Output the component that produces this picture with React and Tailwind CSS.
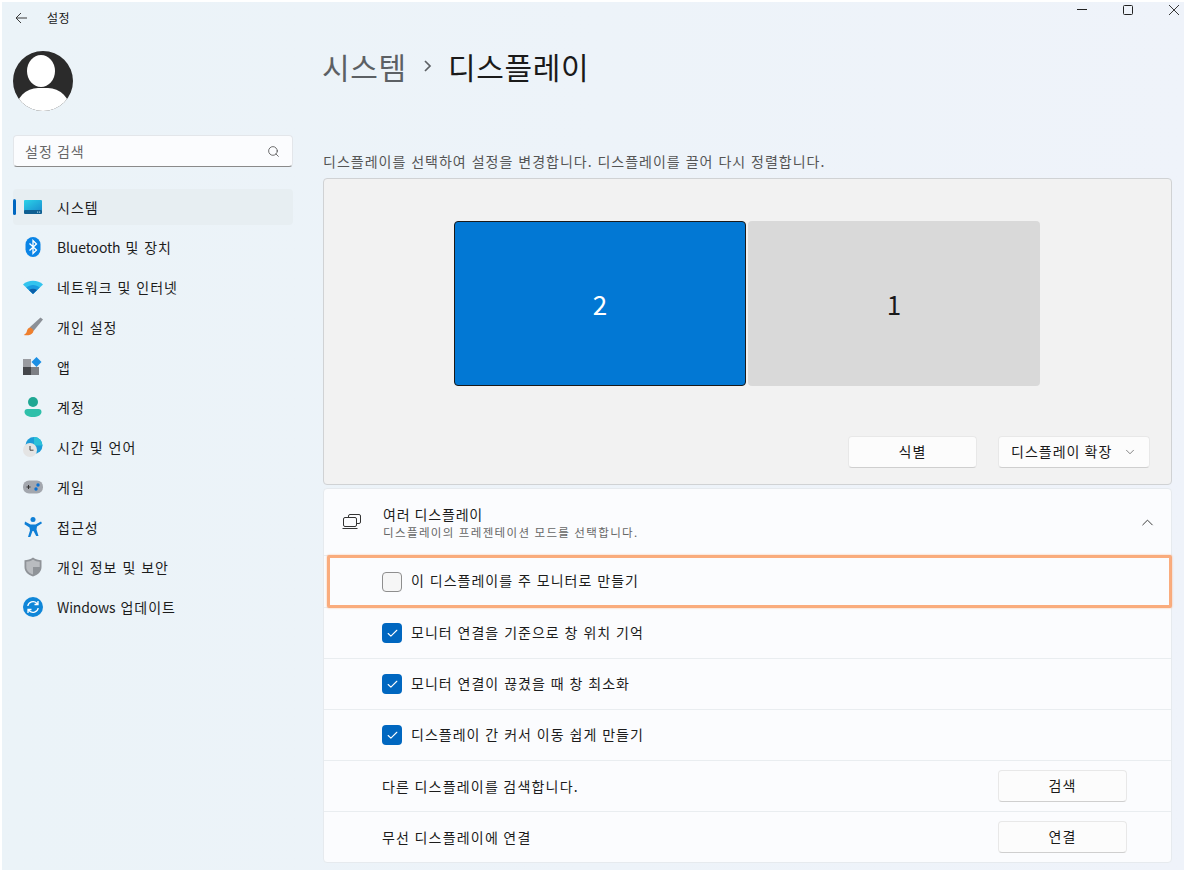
import { Search, ChevronDown, ChevronUp, Check } from 'lucide-react';

const FONT = { fontFamily: '"Noto Sans CJK KR", "Open Sans", sans-serif' };

// Sidebar icons, drawn at 20x20
function SystemIcon() {
  return (
    <svg width="20" height="20" viewBox="0 0 20 20">
      <defs>
        <linearGradient id="sys" x1="0" y1="0" x2="1" y2="1">
          <stop offset="0" stopColor="#2bd3e8" />
          <stop offset="1" stopColor="#1a8fd0" />
        </linearGradient>
      </defs>
      <rect x="1" y="3" width="18" height="11" rx="1" fill="url(#sys)" />
      <rect x="1" y="13" width="18" height="4" rx="1" fill="#0f5f92" />
      <rect x="14" y="14.6" width="1.2" height="1" fill="#bfe4f5" />
      <rect x="16" y="14.6" width="1.2" height="1" fill="#bfe4f5" />
    </svg>
  );
}

function BluetoothIcon() {
  return (
    <svg width="20" height="20" viewBox="0 0 20 20">
      <rect x="2.500" y="0" width="15" height="20" rx="7.500" fill="#0a84e6" />
      <path d="M6.500 6.500l7 6.500-3.500 3.500V3.500l3.500 3.500-7 6.500" fill="none" stroke="#fff" strokeWidth="1.3" />
    </svg>
  );
}

function WifiIcon() {
  return (
    <svg width="20" height="20" viewBox="0 0 20 20">
      <path d="M0 7.500C5 2.500 15 2.500 20 7.500L10 17z" fill="#33c4ee" />
      <path d="M3.200 10.500c4-3.400 9.600-3.400 13.600 0L10 17z" fill="#1a9be0" />
      <path d="M6 13c2.400-1.800 5.600-1.800 8 0l-4 4z" fill="#0c5fa8" />
    </svg>
  );
}

function BrushIcon() {
  return (
    <svg width="20" height="20" viewBox="0 0 20 20">
      <path d="M17.500 0.500L20 2.500 10.500 14 6.500 10.500z" fill="#8b9097" />
      <path d="M7.300 10.500c-2.600.4-3 2.200-3.600 4.200-.4 1.400-1.400 2.200-3 3.300 3.500.6 7.600.2 9.300-2.600.8-1.300.4-2.600-.4-3.400z" fill="#ee7f2e" />
    </svg>
  );
}

function AppsIcon() {
  return (
    <svg width="20" height="20" viewBox="0 0 20 20">
      <rect x="0" y="2" width="8" height="8" fill="#9a9ca1" />
      <rect x="0" y="10" width="8" height="8" fill="#45474b" />
      <rect x="8" y="10" width="8" height="8" fill="#7d7f84" />
      <path d="M13.500 0L18.500 5l-5 5-5-5z" fill="#1b8fe4" />
    </svg>
  );
}

function AccountIcon() {
  return (
    <svg width="20" height="20" viewBox="0 0 20 20">
      <circle cx="10" cy="5" r="5" fill="#1fa793" />
      <path d="M1.500 15a3 3 0 0 1 3-3h11a3 3 0 0 1 3 3c0 3-4 5-8.500 5s-8.500-2-8.500-5z" fill="#2fc0aa" />
    </svg>
  );
}

function TimeIcon() {
  return (
    <svg width="20" height="20" viewBox="0 0 20 20">
      <circle cx="11" cy="8.500" r="8.500" fill="#1b9bd8" />
      <path d="M11 0a8.500 8.500 0 0 1 8.500 8.500H11z" fill="#2bc0d8" />
      <circle cx="7" cy="13" r="7" fill="#e4e4e4" />
      <path d="M7 9v4.200h3.500" fill="none" stroke="#444" strokeWidth="1" />
    </svg>
  );
}

function GameIcon() {
  return (
    <svg width="20" height="20" viewBox="0 0 20 20">
      <rect x="0" y="3.500" width="20" height="13" rx="6" fill="#a3a7ae" />
      <path d="M3.500 10h4M5.500 8v4" stroke="#333" strokeWidth="1" />
      <circle cx="15" cy="8" r="1.700" fill="#0a6fd0" />
      <circle cx="13" cy="12" r="1.700" fill="#0a6fd0" />
    </svg>
  );
}

function AccessIcon() {
  return (
    <svg width="20" height="20" viewBox="0 0 20 20">
      <circle cx="10" cy="2.500" r="2.500" fill="#0f7fd6" />
      <path d="M2 4.500l5.500 3h5l5.500-3 1 1.800-5 3.200-.5 3 2 6.500h-2.300L10.500 14h-1L7.300 20H5l2-6.500-.5-3-5-3.200z" fill="#0f7fd6" />
    </svg>
  );
}

function ShieldIcon() {
  return (
    <svg width="20" height="20" viewBox="0 0 20 20">
      <path d="M10 0.500c2.500 1.800 5.500 2.700 8.500 2.700V10c0 4.500-3.500 8-8.500 9.500C5 18 1.500 14.500 1.500 10V3.200c3 0 6-.9 8.500-2.700z" fill="#8f9398" />
      <path d="M10 2.500c2 1.400 4.500 2.200 6.700 2.300V10H10V17.500C6 16 3.300 13.500 3.300 10V4.800C5.500 4.700 8 3.900 10 2.500z" fill="#b9bcc0" />
    </svg>
  );
}

function UpdateIcon() {
  return (
    <svg width="20" height="20" viewBox="0 0 20 20">
      <circle cx="10" cy="10" r="10" fill="#0f86d8" />
      <path d="M4.800 9a5.300 5.300 0 0 1 9-2.800l1 1M15 4v3.500h-3.500" fill="none" stroke="#fff" strokeWidth="1.300" />
      <path d="M15.200 11a5.300 5.300 0 0 1-9 2.800l-1-1M5 16v-3.500h3.500" fill="none" stroke="#fff" strokeWidth="1.300" />
    </svg>
  );
}

function DisplaysIcon() {
  return (
    <svg width="20" height="16" viewBox="0 0 20 16" fill="none" stroke="#333" strokeWidth="1">
      <path d="M6.500 3V2a1.500 1.500 0 0 1 1.500-1.500h9A1.500 1.500 0 0 1 18.500 2v6A1.500 1.500 0 0 1 17 9.500h-2.500" />
      <rect x="1.500" y="3.500" width="13" height="9" rx="1.500" fill="#fbfcfe" />
      <path d="M0.500 14.500h15" />
    </svg>
  );
}

const NAV = [
  { label: '시스템', icon: <SystemIcon />, active: true },
  { latin: 'Bluetooth', label: ' 및 장치', icon: <BluetoothIcon /> },
  { label: '네트워크 및 인터넷', icon: <WifiIcon /> },
  { label: '개인 설정', icon: <BrushIcon /> },
  { label: '앱', icon: <AppsIcon /> },
  { label: '계정', icon: <AccountIcon /> },
  { label: '시간 및 언어', icon: <TimeIcon /> },
  { label: '게임', icon: <GameIcon /> },
  { label: '접근성', icon: <AccessIcon /> },
  { label: '개인 정보 및 보안', icon: <ShieldIcon /> },
  { latin: 'Windows', label: ' 업데이트', icon: <UpdateIcon /> },
];

const OPTIONS = [
  { label: '이 디스플레이를 주 모니터로 만들기', checked: false, first: true },
  { label: '모니터 연결을 기준으로 창 위치 기억', checked: true },
  { label: '모니터 연결이 끊겼을 때 창 최소화', checked: true },
  { label: '디스플레이 간 커서 이동 쉽게 만들기', checked: true },
];

function Sidebar() {
  return (
    <aside className="flex w-[321px] shrink-0 flex-col pl-[11px] pr-[30px]">
      <div className="flex h-[32px] items-center">
        <svg width="12" height="12" viewBox="0 0 12 12" fill="none" stroke="#3a3a3a" strokeWidth="1" className="ml-[2px]">
          <path d="M12 6H1M6 1L1 6l5 5" />
        </svg>
        <span className="ml-[20px] text-[12px] tracking-[0.5px] text-[#1a1a1a]">설정</span>
      </div>
      <div className="relative mt-[17px] h-[60px] w-[60px] overflow-hidden rounded-full bg-[#2b2b2b]">
        <div className="absolute left-[14px] top-[4px] h-[32px] w-[28px] rounded-[50%] bg-white" />
        <div className="absolute left-[3px] top-[37px] h-[40px] w-[54px] rounded-t-[22px] bg-white" />
      </div>
      <div className="mt-[24px] flex h-[32px] items-center justify-between rounded-[4px] border border-[#e3e6ea] border-b-[#8a8a8a] bg-[#fbfcfe] pl-[11px] pr-[12px]">
        <span className="text-[14px] tracking-[1px] text-[#666]">설정 검색</span>
        <Search size={13} strokeWidth={1.3} className="text-[#333]" />
      </div>
      <nav className="mt-[22px] flex flex-col gap-[4px]">
        {NAV.map((item) => (
          <div
            key={item.label}
            className={`relative flex h-[36px] items-center rounded-[4px] ${item.active ? 'bg-[#e7eef2]' : ''}`}
          >
            {item.active && <span className="absolute left-0 top-[10px] h-[16px] w-[3px] rounded-full bg-[#0067c0]" />}
            <span className="ml-[10px] flex w-[20px] justify-center">{item.icon}</span>
            <span className="ml-[14px] whitespace-pre pt-[1px] text-[14px] tracking-[1px] text-[#1c1c1c] [word-spacing:0.8px]">
              {item.latin && <span className="tracking-[-0.15px]">{item.latin}</span>}
              {item.label}
            </span>
          </div>
        ))}
      </nav>
    </aside>
  );
}

function Monitor({ num, active }) {
  return (
    <div
      className={`flex h-[165px] w-[292px] items-center justify-center rounded-[4px] text-[26px] ${
        active ? 'border border-[#1a1a1a] bg-[#0278d4] text-white' : 'bg-[#d9d9d9] text-[#1a1a1a]'
      }`}
    >
      {num}
    </div>
  );
}

function ActionButton({ children, className = 'w-[129px] justify-center' }) {
  return (
    <button className={`flex h-[32px] items-center rounded-[4px] border border-[#e8e8e8] border-b-[#cfcfcf] bg-[#fcfcfc] pb-[1px] text-[14px] tracking-[1px] text-[#1a1a1a] ${className}`}>
      {children}
    </button>
  );
}

function OptionRow({ label, checked, first }) {
  return (
    <div className={`flex items-center border-t border-[#e9edf0] pl-[58px] ${first ? 'h-[52px]' : 'h-[51px]'}`}>
      {checked ? (
        <span className="flex h-[20px] w-[20px] items-center justify-center rounded-[4px] bg-[#0067c0]">
          <Check size={13} strokeWidth={2} className="text-white" />
        </span>
      ) : (
        <span className="h-[20px] w-[20px] rounded-[4px] border border-[#8e8e8e] bg-[#f6f6f6]" />
      )}
      <span className="mb-[2px] ml-[9px] text-[14px] tracking-[1px] text-[#1c1c1c] [word-spacing:0.8px]">{label}</span>
    </div>
  );
}

function Settings() {
  return (
    <main className="flex min-w-0 flex-1 flex-col pr-[12px]">
      {/* window controls */}
      <div className="-mr-[12px] flex h-[14px] justify-end gap-[36px] pr-[5px] pt-[3px]">
        <svg width="10" height="10" viewBox="0 0 10 10" stroke="#222" strokeWidth="1"><path d="M0 4.500h10" /></svg>
        <svg width="10" height="10" viewBox="0 0 10 10" fill="none" stroke="#222" strokeWidth="1"><rect x="0.500" y="0.500" width="9" height="9" rx="1" /></svg>
        <svg width="10" height="10" viewBox="0 0 10 10" stroke="#222" strokeWidth="0.9"><path d="M0 0l10 10M10 0L0 10" /></svg>
      </div>
      <div className="-ml-[1px] mt-[27px] flex h-[46px] items-center text-[30px] tracking-[0.7px]">
        <span className="text-[#5c6064]">시스템</span>
        <span className="ml-[15px] text-[#5c6064]">
          <svg width="12" height="14" viewBox="0 0 12 14" fill="none" stroke="currentColor" strokeWidth="1.7">
            <path d="M3 2l5 5-5 5" />
          </svg>
        </span>
        <span className="ml-[14px] text-[#1a1a1a]">디스플레이</span>
      </div>
      <p className="mt-[62px] h-[20px] text-[14px] leading-[20px] tracking-[1px] text-[#555] [word-spacing:0.8px]">
        디스플레이를 선택하여 설정을 변경합니다. 디스플레이를 끌어 다시 정렬합니다.
      </p>
      <section className="mt-[7px] h-[307px] rounded-[4px] border border-[#d0d2d4] bg-[#f2f2f2]">
        <div className="ml-[130px] mt-[42px] flex gap-[2px]">
          <Monitor num="2" active />
          <Monitor num="1" />
        </div>
        <div className="mr-[21px] mt-[50px] flex justify-end gap-[21px]">
          <ActionButton>식별</ActionButton>
          <ActionButton className="w-[152px] justify-between pl-[12px] pr-[12px]">
            디스플레이 확장
            <ChevronDown size={14} strokeWidth={1.1} className="text-[#444]" />
          </ActionButton>
        </div>
      </section>
      <section className="relative mt-[3px] h-[375px] rounded-[4px] border border-[#e6eaee] bg-[#fbfcfe]">
        <div className="flex h-[66px] items-center pl-[18px] pr-[14px]">
          <DisplaysIcon />
          <div className="ml-[21px] flex-1 pt-[2px]">
            <div className="text-[14px] leading-[18px] tracking-[0.85px] text-[#1c1c1c]">여러 디스플레이</div>
            <div className="text-[11.5px] leading-[19px] tracking-[1.38px] text-[#666]">디스플레이의 프레젠테이션 모드를 선택합니다.</div>
          </div>
          <ChevronUp size={19} strokeWidth={1.2} className="text-[#333]" />
        </div>
        {OPTIONS.map((opt) => (
          <OptionRow key={opt.label} {...opt} />
        ))}
        <div className="flex h-[51px] items-center justify-between border-t border-[#e9edf0] pl-[58px] pr-[44px]">
          <span className="text-[14px] tracking-[1.2px] text-[#1c1c1c]">다른 디스플레이를 검색합니다.</span>
          <ActionButton>검색</ActionButton>
        </div>
        <div className="flex h-[51px] items-center justify-between border-t border-[#e9edf0] pl-[58px] pr-[44px]">
          <span className="text-[14px] tracking-[1.2px] text-[#1c1c1c]">무선 디스플레이에 연결</span>
          <ActionButton>연결</ActionButton>
        </div>
        {/* orange marker drawn over the first option */}
        <div className="absolute left-[3px] right-[-1px] top-[66px] h-[53px] rounded-[2px] border-[3px] border-[#f9a36f]/90 shadow-[0_0_2px_#f9b58a]" />
      </section>
    </main>
  );
}

export default function App() {
  return (
    <div className="h-[872px] w-[1186px] overflow-hidden bg-white p-[2px]" style={FONT}>
      <div className="flex h-[868px] w-[1182px] bg-gradient-to-r from-[#ebf3f8] to-[#eff3fa]">
        <Sidebar />
        <Settings />
      </div>
    </div>
  );
}
